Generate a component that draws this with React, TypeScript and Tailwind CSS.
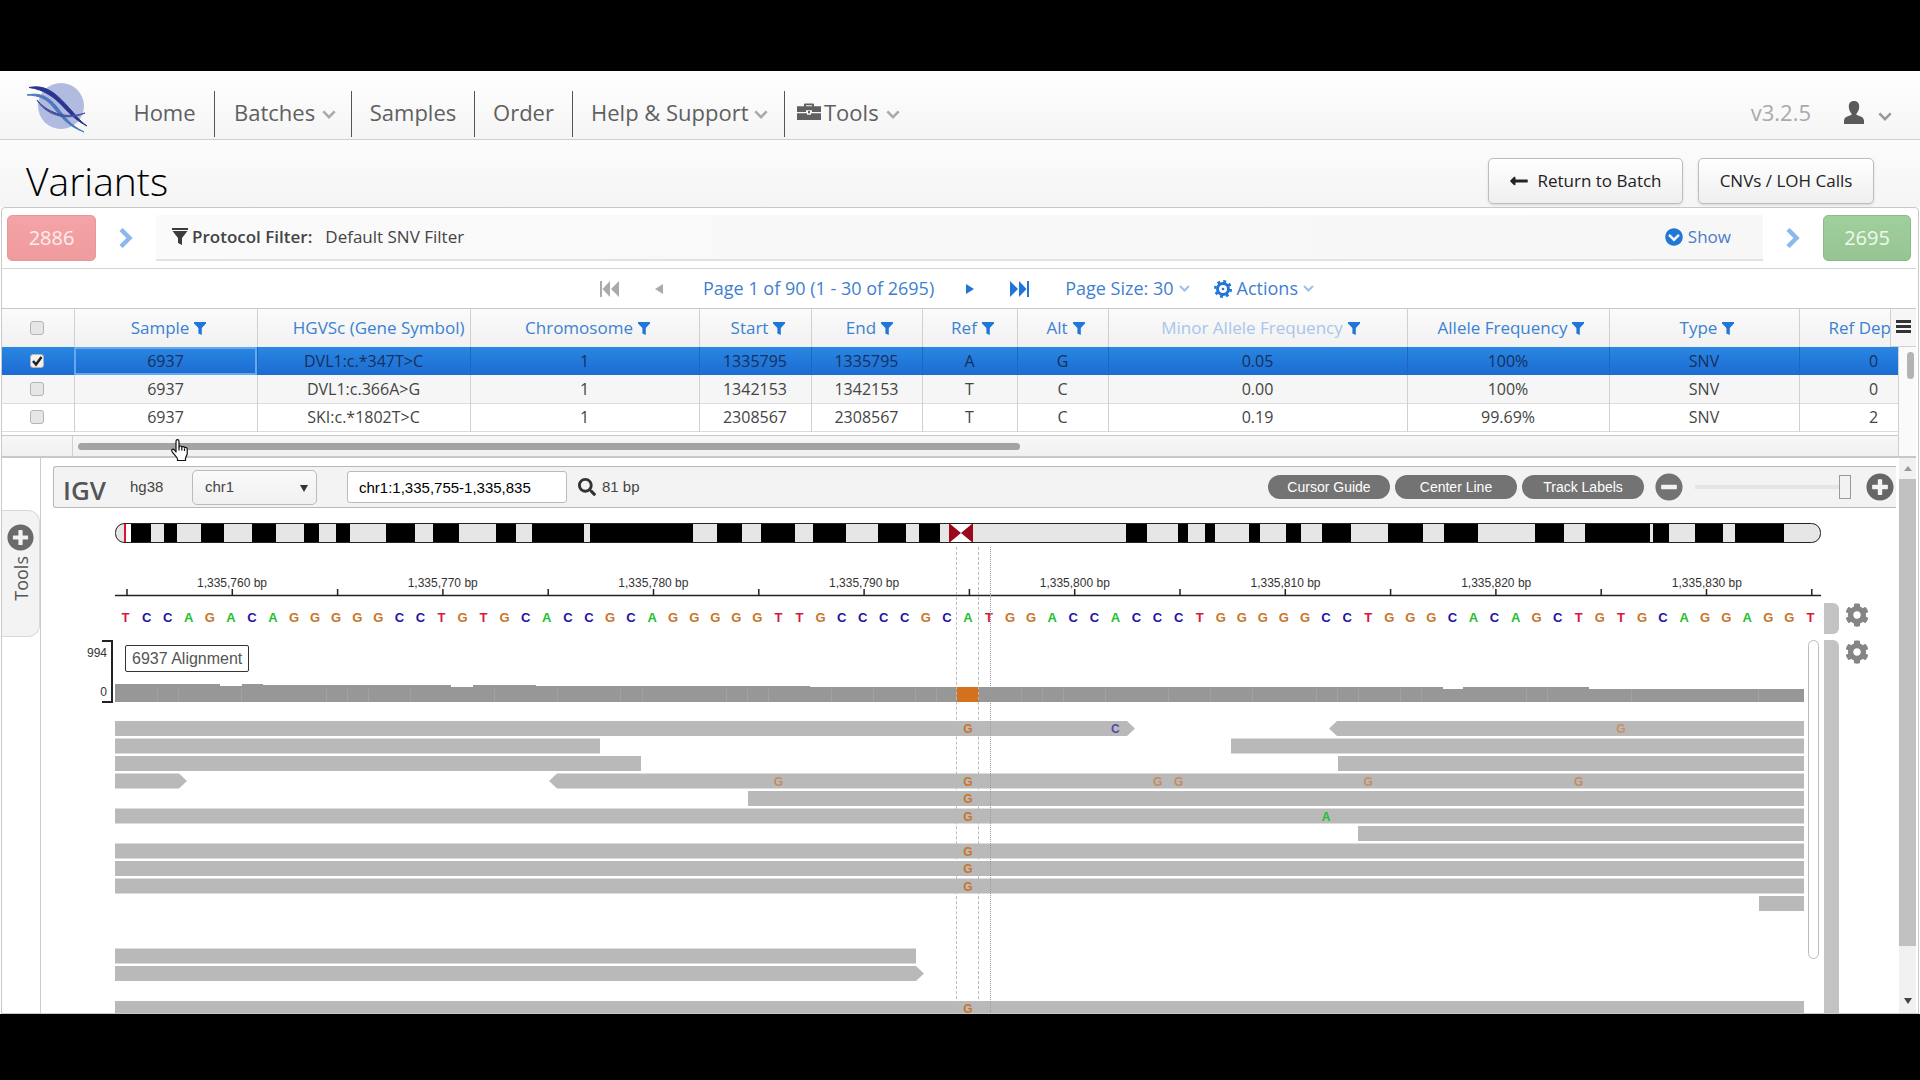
import React from "react";
import { FaChevronCircleDown, FaCog, FaLongArrowAltLeft, FaMinusCircle, FaPlusCircle, FaSearch } from "react-icons/fa";

interface Column {
  label: string;
  width: number;
  filter: boolean;
  faded?: boolean;
}

interface Variant {
  selected: boolean;
  cells: string[];
}

interface Read {
  row: number;
  from: number;
  to: number;
  arrow?: "left" | "right";
}

interface Mismatch {
  row: number;
  base: number;
  letter: string;
  opacity: number;
}

const COLUMNS: Column[] = [
  { label: "Sample", width: 183, filter: true },
  { label: "HGVSc (Gene Symbol)", width: 213, filter: false },
  { label: "Chromosome", width: 229, filter: true },
  { label: "Start", width: 112, filter: true },
  { label: "End", width: 111, filter: true },
  { label: "Ref", width: 95, filter: true },
  { label: "Alt", width: 91, filter: true },
  { label: "Minor Allele Frequency", width: 299, filter: true, faded: true },
  { label: "Allele Frequency", width: 202, filter: true },
  { label: "Type", width: 190, filter: true },
  { label: "Ref Depth", width: 149, filter: true },
];

const VARIANTS: Variant[] = [
  { selected: true, cells: ["6937", "DVL1:c.*347T>C", "1", "1335795", "1335795", "A", "G", "0.05", "100%", "SNV", "0"] },
  { selected: false, cells: ["6937", "DVL1:c.366A>G", "1", "1342153", "1342153", "T", "C", "0.00", "100%", "SNV", "0"] },
  { selected: false, cells: ["6937", "SKI:c.*1802T>C", "1", "2308567", "2308567", "T", "C", "0.19", "99.69%", "SNV", "2"] },
];

const SEQUENCE = "TCCAGACAGGGGGCCTGTGCACCGCAGGGGGTTGCCCCGCATGGACCACCCTGGGGGCCTGGGCACAGCTGTGCAGGAGGT";

const BASE_COLORS: Record<string, string> = {
  A: "#1fbf2f",
  C: "#1f14a8",
  G: "#c9742b",
  T: "#d8173c",
};

const TRACK_WIDTH = 1706;
const READ_END = 1689;
const BASE_WIDTH = TRACK_WIDTH / SEQUENCE.length;
const ROW_PITCH = 17.5;

// [start, end] of the dark cytobands
const BANDS: [number, number][] = [
  [16, 36], [49, 62], [86, 109], [137, 161], [189, 204], [221, 235], [271, 300], [318, 344],
  [381, 401], [417, 469], [475, 578], [602, 627], [646, 680], [698, 731], [763, 791], [804, 825],
  [1011, 1032], [1063, 1073], [1090, 1100], [1134, 1145], [1171, 1186], [1207, 1236], [1273, 1308],
  [1329, 1363], [1420, 1449], [1470, 1535], [1538, 1554], [1580, 1608], [1620, 1669],
];

// [start, end, height]
const COVERAGE: [number, number, number][] = [
  [0, 105, 18], [105, 127, 16], [127, 148, 18], [148, 336, 17], [336, 358, 15], [358, 421, 17],
  [421, 695, 16], [695, 1328, 15], [1328, 1348, 13], [1348, 1474, 15], [1474, READ_END, 13],
];

const COVERAGE_SEAMS = [2, 3, 6, 10, 11, 12, 14, 18, 21, 24, 25, 29, 30, 31, 34, 36, 38, 39, 43, 44, 45, 47, 50, 52, 54, 57, 58, 59, 61, 62, 67, 68, 72, 78];

const READS: Read[] = [
  { row: 0, from: 0, to: 1020, arrow: "right" },
  { row: 0, from: 1214, to: READ_END, arrow: "left" },
  { row: 1, from: 0, to: 485 },
  { row: 1, from: 1116, to: READ_END },
  { row: 2, from: 0, to: 526 },
  { row: 2, from: 1223, to: READ_END },
  { row: 3, from: 0, to: 72, arrow: "right" },
  { row: 3, from: 434, to: READ_END, arrow: "left" },
  { row: 4, from: 633, to: READ_END },
  { row: 5, from: 0, to: READ_END },
  { row: 6, from: 1243, to: READ_END },
  { row: 7, from: 0, to: READ_END },
  { row: 8, from: 0, to: READ_END },
  { row: 9, from: 0, to: READ_END },
  { row: 10, from: 1644, to: READ_END },
  { row: 13, from: 0, to: 801 },
  { row: 14, from: 0, to: 809, arrow: "right" },
  { row: 16, from: 0, to: READ_END },
];

const MISMATCHES: Mismatch[] = [
  ...[0, 3, 4, 5, 7, 8, 9, 16].map((row) => ({ row, base: 40, letter: "G", opacity: 1 })),
  { row: 0, base: 47, letter: "C", opacity: 0.7 },
  { row: 0, base: 71, letter: "G", opacity: 0.6 },
  ...[31, 49, 50, 59, 69].map((base) => ({ row: 3, base, letter: "G", opacity: 0.65 })),
  { row: 5, base: 57, letter: "A", opacity: 1 },
];

function readPoints({ row, from, to, arrow }: Read) {
  const y = 81 + row * ROW_PITCH;
  const left = arrow === "left" ? from + 8 : from;
  const right = arrow === "right" ? to - 8 : to;
  const mid = y + 7.5;
  return [
    `${left},${y}`,
    `${right},${y}`,
    arrow === "right" ? `${to},${mid}` : "",
    `${right},${y + 15}`,
    `${left},${y + 15}`,
    arrow === "left" ? `${from},${mid}` : "",
  ].join(" ");
}

function Caret({ className }: { className: string }) {
  return (
    <svg viewBox="0 0 16 10" className={className} fill="none" stroke="currentColor" strokeWidth="3" aria-hidden="true">
      <path d="M1.5 1.5 8 8l6.500-6.500" />
    </svg>
  );
}

function NextChevron() {
  return (
    <svg viewBox="0 0 14 20" className="h-5 w-[14px] text-[#8db8ee]" fill="none" stroke="currentColor" strokeWidth="4.500" aria-hidden="true">
      <path d="M2 1.500 10.500 10 2 18.500" />
    </svg>
  );
}

function Funnel({ className }: { className: string }) {
  return (
    <svg viewBox="0 0 12 13" className={className} fill="currentColor" aria-hidden="true">
      <path d="M0 0h12v1.500L7.800 6V13L4.400 11.500V6L0 1.500z" />
    </svg>
  );
}

function Logo() {
  return (
    <svg viewBox="0 0 62 50" className="h-[50px] w-[62px]" fill="none" aria-label="Home page" role="img">
      <circle cx="34" cy="23" r="23" fill="#b0bbdf" />
      <path d="M2 4.500C18 1.500 27 9 38 20.500s13 16 22 22.500C50 38 44 32 35.500 23S17 6.500 2 4.500z" fill="#2b3590" stroke="#2b3590" />
      <path d="M0 12c13-3 22 2 30 12s13 18 27 25c-16-6-22-14-30-24S12 12.500 0 12z" fill="#4a79bd" stroke="#4a79bd" />
      <path d="M10 17c9 11 27 20 48 13-20 9-40 1-48-13z" fill="#45549f" stroke="#45549f" />
    </svg>
  );
}

function NavBar() {
  const item = "flex h-[46px] items-center border-[#555] pb-1 text-[22px] leading-8 text-[#606060]";
  return (
    <header className="flex h-[69px] shrink-0 items-start border-b border-[#d0d0d0] bg-gradient-to-b from-white to-[#f5f5f5] pt-5 pr-7 pl-[27px]">
      <a href="#home" className="-mt-2 block">
        <Logo />
      </a>
      <nav className="ml-6 flex">
        <a href="#home" className={`${item} w-[102px] justify-center border-r pl-[2px]`}>Home</a>
        <button className={`${item} w-[137px] gap-[7px] border-r pl-[19px]`}>
          Batches <Caret className="mt-1 h-[9px] w-[14px] text-[#aaa]" />
        </button>
        <a href="#samples" className={`${item} w-[123px] justify-center border-r`}>Samples</a>
        <a href="#order" className={`${item} w-[98px] justify-center border-r`}>Order</a>
        <button className={`${item} w-[212px] gap-[5px] border-r pl-[18px]`}>
          Help &amp; Support <Caret className="mt-1 h-[9px] w-[14px] text-[#aaa]" />
        </button>
        <button className={`${item} pl-3`}>
          <svg viewBox="0 0 24 20" className="mr-[3px] h-[18px] w-6" fill="currentColor" preserveAspectRatio="none" aria-hidden="true">
            <path d="M7 3.500V2c0-1 .5-1.500 1.500-1.500h7c1 0 1.500.5 1.500 1.500v1.500h7V10h-9V8H9v2H0V3.500zM9 2.500v1h6v-1zM0 11.500h10V13h4v-1.500h10V19H0z" />
            <path d="M11 9h2v2.500h-2z" />
          </svg>
          Tools <Caret className="mt-1 ml-[7px] h-[9px] w-[14px] text-[#aaa]" />
        </button>
      </nav>
      <div className="ml-auto flex h-[46px] items-center pb-1">
        <span className="mr-[33px] text-[22px] text-[#aaa]">v3.2.5</span>
        <button aria-label="Account" className="flex items-center gap-[14px]">
          <svg viewBox="0 0 20 23" className="h-[23px] w-5 text-[#5a5a5a]" fill="currentColor" aria-hidden="true">
            <path d="M10 0c3.500 0 5.200 2.200 5.200 5.500 0 3-1.200 5.500-2.700 7v1.500c3 1 7 1.500 7.500 5.500V23H0v-3.500C.5 15.500 4.500 15 7.500 14v-1.500c-1.500-1.500-2.700-4-2.700-7C4.800 2.200 6.500 0 10 0z" />
          </svg>
          <Caret className="mt-2 h-[9px] w-[14px] text-[#999]" />
        </button>
      </div>
    </header>
  );
}

function TitleBar() {
  const button =
    "flex h-[46px] items-center justify-center rounded-[5px] border border-[#bdbdbd] bg-gradient-to-b from-white to-[#efefef] text-[17px] text-[#222] shadow-sm";
  return (
    <div className="flex h-[67px] shrink-0 items-center gap-[15px] bg-gradient-to-b from-[#fcfcfc] to-[#f5f5f5] pt-[17px] pr-[46px] pb-[2px] pl-[26px]">
      <h1 className="mr-auto text-[39px] leading-[46px] font-light text-black">Variants</h1>
      <button className={`${button} w-[195px] gap-2`}>
        <FaLongArrowAltLeft size={20} aria-hidden="true" />
        Return to Batch
      </button>
      <button className={`${button} w-[176px]`}>CNVs / LOH Calls</button>
    </div>
  );
}

function FilterBar() {
  return (
    <div className="flex h-[61px] shrink-0 items-center border-b border-[#d4d4d4] px-[5px]">
      <button className="h-[46px] w-[89px] rounded-[5px] border border-[#e39a9c] bg-gradient-to-b from-[#f5a3a6] to-[#f09b9e] text-[20px] text-[#fdeeee]">
        2886
      </button>
      <div className="flex w-15 justify-center">
        <NextChevron />
      </div>
      <div className="flex h-[46px] flex-1 items-center border-b-2 border-[#e2e2e2] bg-gradient-to-r from-[#fafafa] to-[#f7f7f7] pr-8 pl-4 text-[17px] text-[#444]">
        <svg viewBox="0 0 16 18" className="mr-[4px] h-[18px] w-4 text-[#3c3c3c]" fill="currentColor" aria-hidden="true">
          <path d="M0 0h16v2H0zM.5 3h15L10 10v7l-4-2v-5z" />
        </svg>
        <strong className="mr-[13px] font-semibold">Protocol Filter:</strong>
        <span>Default SNV Filter</span>
        <button className="ml-auto flex items-center gap-[5px] text-[17px] text-[#4a7cc8]">
          <FaChevronCircleDown size={18} className="text-[#1f78d8]" aria-hidden="true" />
          Show
        </button>
      </div>
      <div className="flex w-15 justify-center">
        <NextChevron />
      </div>
      <button className="h-[46px] w-[88px] rounded-[5px] border border-[#8dba89] bg-gradient-to-b from-[#9fd09b] to-[#97c493] text-[20px] text-[#effaee]">
        2695
      </button>
    </div>
  );
}

function Pager() {
  return (
    <div className="flex h-[39px] shrink-0 items-center justify-center pr-1 text-[18px] text-[#3f7fce]">
      <button aria-label="First page" className="mr-9 text-[#aaa]">
        <svg viewBox="0 0 19 16" className="h-4 w-[19px]" fill="currentColor" aria-hidden="true">
          <path d="M0 0h2v16H0zM10 0v16L2.500 8zM19 0v16l-8-8z" />
        </svg>
      </button>
      <button aria-label="Previous page" className="mr-10 text-[#aaa]">
        <svg viewBox="0 0 8 10" className="h-[10px] w-2" fill="currentColor" aria-hidden="true">
          <path d="M8 0v10L0 5z" />
        </svg>
      </button>
      <span className="mr-8">Page 1 of 90 (1 - 30 of 2695)</span>
      <button aria-label="Next page" className="mr-9 text-[#1f75d8]">
        <svg viewBox="0 0 8 10" className="h-[10px] w-2" fill="currentColor" aria-hidden="true">
          <path d="M0 0v10l8-5z" />
        </svg>
      </button>
      <button aria-label="Last page" className="mr-9 text-[#1f75d8]">
        <svg viewBox="0 0 19 16" className="h-4 w-[19px]" fill="currentColor" aria-hidden="true">
          <path d="M17 0h2v16h-2zM9 0v16l7.500-8zM0 0v16l8-8z" />
        </svg>
      </button>
      <button className="mr-6 flex items-center gap-[5px]">
        Page Size: 30 <Caret className="h-[7px] w-[11px] text-[#9dbfe8]" />
      </button>
      <button className="flex items-center gap-[5px]">
        <svg viewBox="0 0 18 18" className="h-[18px] w-[18px] text-[#1f75d8]" fill="none" stroke="currentColor" aria-hidden="true">
          <circle cx="9" cy="9" r="5.500" strokeWidth="3" />
          <circle cx="9" cy="9" r="7.800" strokeWidth="2.400" strokeDasharray="2.900 3.226" />
          <circle cx="9" cy="9" r="1.300" fill="currentColor" stroke="none" />
        </svg>
        Actions <Caret className="h-[7px] w-[11px] text-[#9dbfe8]" />
      </button>
    </div>
  );
}

const CHECKBOX =
  "block h-[14px] w-[14px] appearance-none rounded-[3px] border border-[#b5b5b5] bg-[#e6e6e6] checked:bg-[#f2f2f2]";

function RowCheckbox({ label, checked }: { label: string; checked: boolean }) {
  return (
    <div className="relative mx-auto h-[14px] w-[14px]">
      <input type="checkbox" aria-label={label} defaultChecked={checked} className={CHECKBOX} />
      {checked && (
        <svg viewBox="0 0 14 14" className="pointer-events-none absolute inset-0" fill="none" stroke="#222" strokeWidth="2.500" aria-hidden="true">
          <path d="M3 7l3 3.500L11.500 3" />
        </svg>
      )}
    </div>
  );
}

function VariantTable() {
  return (
    <div className="relative flex h-[149px] shrink-0 border-y border-[#c8c8c8]">
      <div className="relative min-w-0 flex-1 overflow-hidden">
        <table className="w-[1946px] table-fixed border-collapse text-center text-[16px] text-[#444]">
          <colgroup>
            <col style={{ width: 72 }} />
            {COLUMNS.map((column) => (
              <col key={column.label} style={{ width: column.width }} />
            ))}
          </colgroup>
          <thead>
            <tr className="h-[38px] bg-gradient-to-b from-[#fbfbfb] to-[#f1f1f1]">
              <th scope="col" className="border-r border-[#d0d0d0] p-0 pr-[2px]">
                <RowCheckbox label="Select all variants" checked={false} />
              </th>
              {COLUMNS.map((column) => (
                <th
                  key={column.label}
                  scope="col"
                  className={`border-r border-[#d0d0d0] p-0 text-[17px] font-normal whitespace-nowrap ${column.faded ? "text-[#a9c5ea]" : "text-[#3b82d0]"} ${column.filter ? "pl-[6px]" : "pr-[5px] text-right"}`}
                >
                  {column.label}
                  {column.filter && <Funnel className="ml-[5px] inline h-[13px] w-3 align-[-1px] text-[#1f78d8]" />}
                </th>
              ))}
            </tr>
          </thead>
          <tbody>
            {VARIANTS.map((variant, index) => (
              <tr
                key={variant.cells[1]}
                className={
                  variant.selected
                    ? "h-7 bg-gradient-to-b from-[#2a87e2] to-[#1c6bd2] text-[#17305c]"
                    : "h-7 border-b border-[#dcdcdc] odd:bg-white even:bg-[#f6f6f6]"
                }
              >
                <td className={`border-r p-0 pr-[2px] ${variant.selected ? "border-[#1f66c0]" : "border-[#d0d0d0]"}`}>
                  <RowCheckbox label={`Select variant ${index + 1}`} checked={variant.selected} />
                </td>
                {variant.cells.map((cell, cellIndex) => (
                  <td
                    key={cellIndex}
                    className={`border-r p-0 leading-6 ${variant.selected ? "border-[#1f66c0]" : "border-[#d0d0d0]"} ${variant.selected && cellIndex === 0 ? "outline-2 -outline-offset-2 outline-[#64a9f0]" : ""}`}
                  >
                    {cell}
                  </td>
                ))}
              </tr>
            ))}
          </tbody>
        </table>
        <div className="absolute inset-x-0 bottom-0 flex h-[21px] items-center border-t border-[#c8c8c8] bg-gradient-to-b from-[#f7f7f7] to-[#f0f0f0]">
          <div className="h-full w-[71px] border-r border-[#d0d0d0]" />
          <div className="ml-[5px] h-[7px] w-[51%] max-w-[942px] rounded-full bg-[#a3a3a3]" />
        </div>
      </div>
      <div className="w-[18px] border-l border-[#d0d0d0] bg-[#fafafa] pt-[43px]">
        <div className="ml-2 h-[27px] w-[7px] rounded-full bg-[#b3b3b3]" />
      </div>
      <button
        aria-label="Column menu"
        className="absolute top-0 right-0 flex h-[38px] w-[26px] flex-col items-center gap-[2px] border-b border-l border-[#d0d0d0] bg-[#f6f6f6] pt-[11px]"
      >
        <span className="h-[3px] w-[15px] bg-[#333]" />
        <span className="h-[3px] w-[15px] bg-[#333]" />
        <span className="h-[3px] w-[15px] bg-[#333]" />
      </button>
    </div>
  );
}

function BrowserToolbar() {
  const pill = "h-6 w-[122px] rounded-full bg-[#737373] text-[14px] leading-6 text-white";
  return (
    <div className="mr-[3px] ml-3 flex h-[42px] items-center rounded-l-[3px] border border-r-0 border-[#b9b9b9] bg-[#f3f3f3] pl-[9px] font-['Liberation_Sans',sans-serif] text-[15px] text-[#444]">
      <span className="w-[67px] pt-[6px] font-['Open_Sans',sans-serif] text-[26px] leading-8 font-semibold text-[#555]">IGV</span>
      <span className="w-[62px]">hg38</span>
      <div className="relative">
        <select
          aria-label="Chromosome"
          defaultValue="chr1"
          className="h-[35px] w-[125px] appearance-none rounded-[5px] border border-[#bbb] bg-gradient-to-b from-[#fafafa] to-[#f0f0f0] pl-3"
        >
          <option value="chr1">chr1</option>
        </select>
        <svg viewBox="0 0 8 7" className="pointer-events-none absolute top-[15px] right-[9px] h-[7px] w-2" fill="#333" aria-hidden="true">
          <path d="M0 0h8L4 7z" />
        </svg>
      </div>
      <input
        aria-label="Locus"
        defaultValue="chr1:1,335,755-1,335,835"
        className="ml-[30px] h-8 w-[220px] rounded-[3px] border border-[#bbb] bg-white pl-[11px] text-black"
      />
      <button aria-label="Search" className="mr-[6px] ml-[11px] text-[#333]">
        <FaSearch size={18} />
      </button>
      <span>81 bp</span>
      <div className="ml-auto flex items-center gap-[5px]">
        <button className={pill}>Cursor Guide</button>
        <button className={pill}>Center Line</button>
        <button className={pill}>Track Labels</button>
      </div>
      <button aria-label="Zoom out" className="ml-[11px] text-[#737373]">
        <FaMinusCircle size={28} />
      </button>
      <input
        type="range"
        aria-label="Zoom"
        defaultValue={100}
        className="mr-[15px] ml-3 h-6 w-[156px] appearance-none bg-transparent [&::-webkit-slider-runnable-track]:h-1 [&::-webkit-slider-runnable-track]:bg-[#e4e4e4] [&::-webkit-slider-thumb]:-mt-[10px] [&::-webkit-slider-thumb]:h-6 [&::-webkit-slider-thumb]:w-3 [&::-webkit-slider-thumb]:appearance-none [&::-webkit-slider-thumb]:border [&::-webkit-slider-thumb]:border-[#999] [&::-webkit-slider-thumb]:bg-[#f2f2f2]"
      />
      <button aria-label="Zoom in" className="mr-[2px] text-[#666]">
        <FaPlusCircle size={28} />
      </button>
    </div>
  );
}

function Ideogram() {
  return (
    <svg viewBox="0 0 1706 20" className="block w-full" aria-label="Chromosome 1" role="img">
      <defs>
        <clipPath id="chromosome">
          <rect x="0" y="0" width="1706" height="20" rx="9" />
        </clipPath>
      </defs>
      <g clipPath="url(#chromosome)">
        <rect width="1706" height="20" fill="#e6e6e6" />
        {BANDS.map(([start, end]) => (
          <rect key={start} x={start} y="0" width={end - start} height="20" fill="#000" />
        ))}
        <rect x="834" y="0" width="24" height="20" fill="#fff" />
        <path d="M834 0l12 10-12 10zM858 0l-12 10 12 10z" fill="#9b0a1a" />
        <rect x="9" width="7" height="20" fill="#fff" />
        <rect x="9" width="2" height="20" fill="#e01030" />
      </g>
      <rect x=".5" y=".5" width="1705" height="19" rx="9" fill="none" stroke="#222" />
    </svg>
  );
}

function Ruler() {
  return (
    <svg viewBox="0 0 1706 60" className="block w-full" aria-label="Ruler" role="img">
      <path d="M0 52.500h1706" stroke="#222" strokeWidth="1.500" />
      {Array.from({ length: 17 }, (_, i) => (
        <path key={i} d={`M${12 + i * 105.3} 46v6`} stroke="#222" strokeWidth="1.500" />
      ))}
      {Array.from({ length: 8 }, (_, i) => (
        <text key={i} x={117 + i * 210.7} y="44" textAnchor="middle" fill="#333" className="text-[12px]">
          {`1,335,${760 + i * 10} bp`}
        </text>
      ))}
    </svg>
  );
}

function Sequence() {
  return (
    <svg viewBox="0 0 1706 31" className="block w-full" aria-label="Reference sequence" role="img">
      {SEQUENCE.split("").map((letter, i) => (
        <text key={i} x={(i + 0.5) * BASE_WIDTH} y="19" textAnchor="middle" fill={BASE_COLORS[letter]} className="text-[13px] font-bold">
          {letter}
        </text>
      ))}
    </svg>
  );
}

function Alignments() {
  return (
    <svg viewBox="0 0 1706 374" className="block w-full" aria-label="6937 Alignment" role="img">
      {COVERAGE.map(([start, end, height]) => (
        <rect key={start} x={start} y={62 - height} width={end - start} height={height} fill="#979797" />
      ))}
      {COVERAGE_SEAMS.map((base) => (
        <rect key={base} x={Math.round(base * BASE_WIDTH)} y="49" width="1" height="13" fill="#a3a3a3" />
      ))}
      <rect x="842" y="47" width="22" height="15" fill="#d3711c" />
      {READS.map((read) => (
        <polygon key={`${read.row}-${read.from}`} points={readPoints(read)} fill="#b9b9b9" />
      ))}
      {MISMATCHES.map(({ row, base, letter, opacity }) => (
        <text
          key={`${row}-${base}`}
          x={(base + 0.5) * BASE_WIDTH}
          y={93 + row * ROW_PITCH}
          textAnchor="middle"
          fill={BASE_COLORS[letter]}
          fillOpacity={opacity}
          className="text-[12px] font-bold"
        >
          {letter}
        </text>
      ))}
    </svg>
  );
}

function Tracks() {
  return (
    <div className="mt-[15px] grid grid-cols-[74px_1fr_78px] font-['Liberation_Sans',sans-serif]">
      <div className="flex flex-col items-end pt-[117px] pr-[2px] text-[12px] text-[#333]">
        <div className="flex h-[63px] w-[11px] justify-end border-y-2 border-r-2 border-[#222]">
          <div className="mr-[4px] flex flex-col items-end justify-between pt-1 pb-[2px] leading-[14px]">
            <span>994</span>
            <span>0</span>
          </div>
        </div>
      </div>

      <div className="relative">
        <Ideogram />
        <Ruler />
        <Sequence />
        <div className="relative mt-[6px]">
          <Alignments />
          <span className="absolute top-[5px] left-[10px] rounded-[2px] border border-[#333] bg-white px-[6px] text-[16px] leading-[25px] text-[#555]">
            6937 Alignment
          </span>
          <div className="absolute top-0 right-[2px] h-[319px] w-[11px] rounded-full border border-[#bbb] bg-white" />
        </div>
        <div className="absolute top-6 bottom-0 left-[49.3%] w-[23px] border-x border-dashed border-[#bbb]" />
        <div className="absolute top-6 bottom-0 left-[51.3%] border-l border-dotted border-[#999]" />
      </div>

      <div className="flex flex-col gap-[6px] pt-20 pl-[3px] text-[#858585]">
        <div className="flex h-[31px] gap-[6px]">
          <div className="w-[15px] rounded-r-[6px] bg-[#c3c3c3]" />
          <button aria-label="Sequence track settings" className="self-start">
            <FaCog size={24} />
          </button>
        </div>
        <div className="flex flex-1 gap-[6px]">
          <div className="w-[15px] rounded-tr-[6px] bg-[#c3c3c3]" />
          <button aria-label="Alignment track settings" className="self-start">
            <FaCog size={24} />
          </button>
        </div>
      </div>
    </div>
  );
}

function GenomeBrowser() {
  return (
    <div className="flex min-h-0 flex-1 overflow-hidden border-t border-[#c8c8c8]">
      <aside className="w-[39px] shrink-0 border-r border-[#ccc] pt-[52px]">
        <button className="flex h-[127px] w-full flex-col items-center gap-[5px] rounded-r-[12px] border border-l-0 border-[#d8d8d8] bg-[#f3f3f3] pt-[13px]">
          <FaPlusCircle size={27} className="text-[#6b6b6b]" aria-hidden="true" />
          <span className="rotate-180 text-[18px] leading-6 text-[#555] [writing-mode:vertical-rl]">Tools</span>
        </button>
      </aside>
      <main className="min-w-0 flex-1 pt-2">
        <BrowserToolbar />
        <Tracks />
      </main>
      <div className="flex w-[17px] shrink-0 flex-col items-center bg-[#f1f1f1]">
        <svg viewBox="0 0 8 5" className="my-[8px] h-[5px] w-2 shrink-0" fill="#999" aria-hidden="true">
          <path d="M0 5h8L4 0z" />
        </svg>
        <div className="h-[467px] w-full bg-[#c1c1c1]" />
        <svg viewBox="0 0 8 6" className="mt-auto mb-[9px] h-[6px] w-2 shrink-0" fill="#444" aria-hidden="true">
          <path d="M0 0h8L4 6z" />
        </svg>
      </div>
    </div>
  );
}

function HandCursor() {
  return (
    <svg viewBox="0 0 17 22" className="pointer-events-none absolute top-[439px] left-[171px] h-[22px] w-[17px]" fill="#fff" stroke="#111" strokeWidth="1.200" strokeLinejoin="round" aria-hidden="true">
      <path d="M5 13V2.500c0-2.400 3-2.400 3 0V8c.6-1.500 2.700-1.300 2.800.3.700-1.200 2.600-.9 2.700.6 1-1 2.700-.5 2.700 1.300v4.300c0 2-1.700 3.500-1.700 5v2H6.500v-1.600C6 18 3.500 16 1.200 12.800-.2 10.500 2 9.500 3.400 11z" />
      <path d="M8 8v3.500M10.800 8.500v3M13.500 9.500v2.500" fill="none" />
    </svg>
  );
}

export default function App() {
  return (
    <div className="relative flex h-screen flex-col overflow-hidden bg-black pt-[71px] pb-[66px] font-['Open_Sans',sans-serif]">
      <div className="flex min-h-0 flex-1 flex-col bg-white">
        <NavBar />
        <TitleBar />
        <section className="mx-[1px] flex min-h-0 flex-1 flex-col rounded-t-[4px] border border-[#c8c8c8] bg-white pr-[2px]">
          <FilterBar />
          <Pager />
          <VariantTable />
          <GenomeBrowser />
        </section>
      </div>
      <HandCursor />
    </div>
  );
}
